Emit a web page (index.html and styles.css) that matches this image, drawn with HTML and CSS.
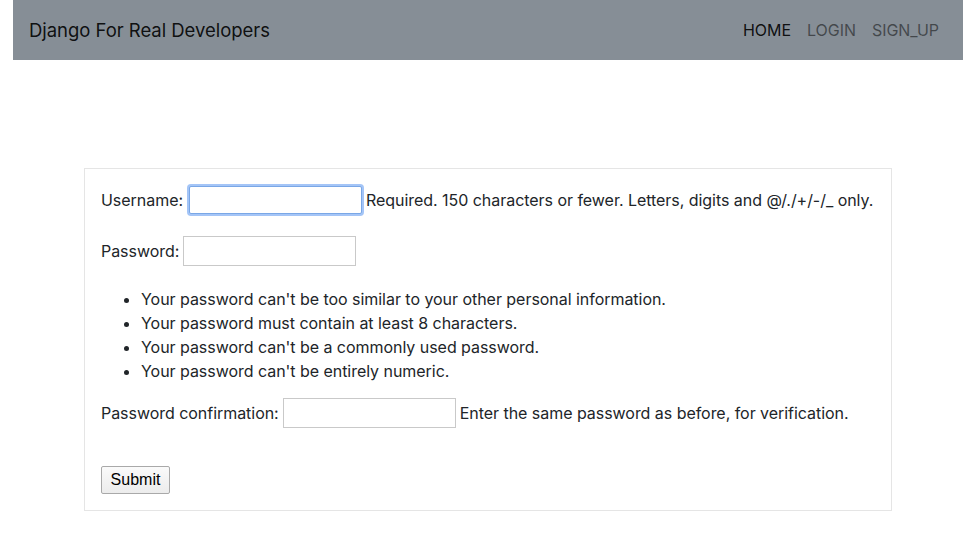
FILE: index.html
```html
<!DOCTYPE html>
<html lang="en">
<head>
<meta charset="utf-8">
<title>Django For Real Developers</title>
<link rel="stylesheet" href="styles.css">
</head>
<body>
<div class="container">
  <nav class="navbar">
    <a class="brand" href="#">Django For Real Developers</a>
    <ul class="nav">
      <li><a class="nav-link active" href="#">HOME</a></li>
      <li><a class="nav-link" href="#">LOGIN</a></li>
      <li><a class="nav-link" href="#">SIGN_UP</a></li>
    </ul>
  </nav>
  <div class="card">
    <form class="form">
      <div class="row">
        <label>Username:</label>
        <input class="field focused" type="text">
        <span class="help">Required. 150 characters or fewer. Letters, digits and @/./+/-/_ only.</span>
      </div>
      <div class="row">
        <label>Password:</label>
        <input class="field" type="password">
      </div>
      <ul class="rules">
        <li>Your password can't be too similar to your other personal information.</li>
        <li>Your password must contain at least 8 characters.</li>
        <li>Your password can't be a commonly used password.</li>
        <li>Your password can't be entirely numeric.</li>
      </ul>
      <div class="row">
        <label>Password confirmation:</label>
        <input class="field" type="password">
        <span class="help">Enter the same password as before, for verification.</span>
      </div>
      <button class="submit" type="button">Submit</button>
    </form>
  </div>
</div>
</body>
</html>
```
FILE: styles.css
```css
* { box-sizing: border-box; }
html, body { margin: 0; padding: 0; background: #fff; }
body {
  font-family: "Inter", "Liberation Sans", sans-serif;
  font-size: 16px;
  letter-spacing: -0.04px;
  color: #212529;
}
.container {
  width: 950px;
  margin-left: 13px;
}
.navbar {
  height: 60px;
  background: #868e96;
  display: flex;
  align-items: center;
  justify-content: space-between;
  padding: 0 16px 1px;
}
.brand {
  font-size: 18.5px;
  color: rgba(0,0,0,.9);
  text-decoration: none;
}
.nav {
  display: flex;
  list-style: none;
  margin: 0;
  padding: 0;
}
.nav-link {
  display: block;
  padding: 8px;
  color: rgba(0,0,0,.5);
  text-decoration: none;
}
.nav-link.active { color: rgba(0,0,0,.9); }
.card {
  width: 808px;
  margin: 108px auto 0;
  border: 1px solid #e5e5e5;
  padding: 16px;
}
.form { display: flex; flex-direction: column; align-items: flex-start; }
.row {
  display: flex;
  align-items: center;
  height: 30px;
  gap: 4px;
  margin-bottom: 21px;
  white-space: nowrap;
}
.row label { line-height: 24px; }
.field {
  flex-shrink: 0;
  width: 173px;
  height: 30px;
  border: 1px solid #c9c9c9;
  border-radius: 0;
  background: #fff;
  padding: 2px 4px;
  font: inherit;
  outline: none;
}
.field.focused {
  border: 1px solid #7aa7e6;
  box-shadow: 0 0 0 2px rgba(90,150,240,.55);
  border-radius: 2px;
  margin-left: 2px;
  height: 28px;
}
.help { line-height: 24px; }
.rules {
  margin: 0 0 15px;
  padding-left: 40px;
  line-height: 24px;
}
.submit {
  margin-top: 17px;
  font-family: "Liberation Sans", sans-serif;
  font-size: 16px;
  letter-spacing: 0;
  color: #000;
  height: 28px;
  width: 69px;
  padding: 0 6px;
  background: linear-gradient(#fafafa, #ececec);
  border: 1px solid #a9a9a9;
  border-radius: 2px;
}
```
